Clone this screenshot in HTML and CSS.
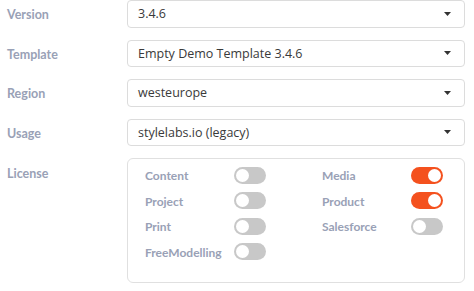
FILE: index.html
```html
<!DOCTYPE html>
<html lang="en">
<head>
    <meta charset="UTF-8">
    <meta name="viewport" content="width=device-width, initial-scale=1.0">
    <title>Environment settings</title>
    <link rel="stylesheet" href="styles.css">
</head>
<body>
    <section class="settings">
        <div class="row">
            <label class="row-label">Version</label>
            <div class="select">
                <span>3.4.6</span>
                <svg class="caret" width="7" height="4" viewBox="0 0 7 4"><path d="M0 0h7L3.5 4z"/></svg>
            </div>
        </div>
        <div class="row">
            <label class="row-label">Template</label>
            <div class="select">
                <span>Empty Demo Template 3.4.6</span>
                <svg class="caret" width="7" height="4" viewBox="0 0 7 4"><path d="M0 0h7L3.5 4z"/></svg>
            </div>
        </div>
        <div class="row">
            <label class="row-label">Region</label>
            <div class="select">
                <span>westeurope</span>
                <svg class="caret" width="7" height="4" viewBox="0 0 7 4"><path d="M0 0h7L3.5 4z"/></svg>
            </div>
        </div>
        <div class="row">
            <label class="row-label">Usage</label>
            <div class="select">
                <span>stylelabs.io (legacy)</span>
                <svg class="caret" width="7" height="4" viewBox="0 0 7 4"><path d="M0 0h7L3.5 4z"/></svg>
            </div>
        </div>
        <div class="row row-top">
            <label class="row-label license-label">License</label>
            <div class="license-box">
                <div class="license-item"><span>Content</span><span class="toggle"></span></div>
                <div class="license-item"><span>Media</span><span class="toggle on"></span></div>
                <div class="license-item"><span>Project</span><span class="toggle"></span></div>
                <div class="license-item"><span>Product</span><span class="toggle on"></span></div>
                <div class="license-item"><span>Print</span><span class="toggle"></span></div>
                <div class="license-item"><span>Salesforce</span><span class="toggle"></span></div>
                <div class="license-item"><span>FreeModelling</span><span class="toggle"></span></div>
            </div>
        </div>
    </section>
</body>
</html>
```

FILE: styles.css
```css
* {
    box-sizing: border-box;
    padding: 0;
    margin: 0;
}
body {
    background: #fff;
    font-family: 'Open Sans', sans-serif;
}
.settings {
    display: flex;
    flex-direction: column;
    gap: 12px;
    padding: 0 9px 0 7px;
}
.row {
    display: flex;
    align-items: center;
}
.row-top {
    align-items: flex-start;
}
.row-label {
    width: 120px;
    flex-shrink: 0;
    padding-top: 2px;
    font-family: 'Lato', sans-serif;
    font-weight: 700;
    font-size: 12.5px;
    color: #99a1b6;
}
.license-label {
    margin-top: 6px;
}
.select {
    flex: 1;
    height: 27.5px;
    display: flex;
    align-items: center;
    justify-content: space-between;
    padding: 0 13px 0 10px;
    border: 1px solid #dcdcdc;
    border-radius: 4px;
    font-size: 12.5px;
    color: #3a3a3a;
}
.caret {
    fill: #333;
}
.license-box {
    flex: 1;
    display: grid;
    grid-template-columns: 177px 1fr;
    row-gap: 8.5px;
    padding: 7.5px 0 21.5px 17px;
    border: 1px solid #e0e0e0;
    border-radius: 6px;
}
.license-item {
    display: flex;
    align-items: center;
}
.license-item span:first-child {
    width: 89px;
    padding-top: 1px;
    font-family: 'Lato', sans-serif;
    font-weight: 700;
    font-size: 12px;
    color: #99a1b6;
}
.toggle {
    position: relative;
    width: 32px;
    height: 17px;
    border-radius: 9px;
    background: #c8c8c8;
}
.toggle::after {
    content: "";
    position: absolute;
    top: 2px;
    left: 2px;
    width: 13px;
    height: 13px;
    border-radius: 50%;
    background: #fff;
}
.toggle.on {
    background: #f4511e;
}
.toggle.on::after {
    left: 17px;
}
```
